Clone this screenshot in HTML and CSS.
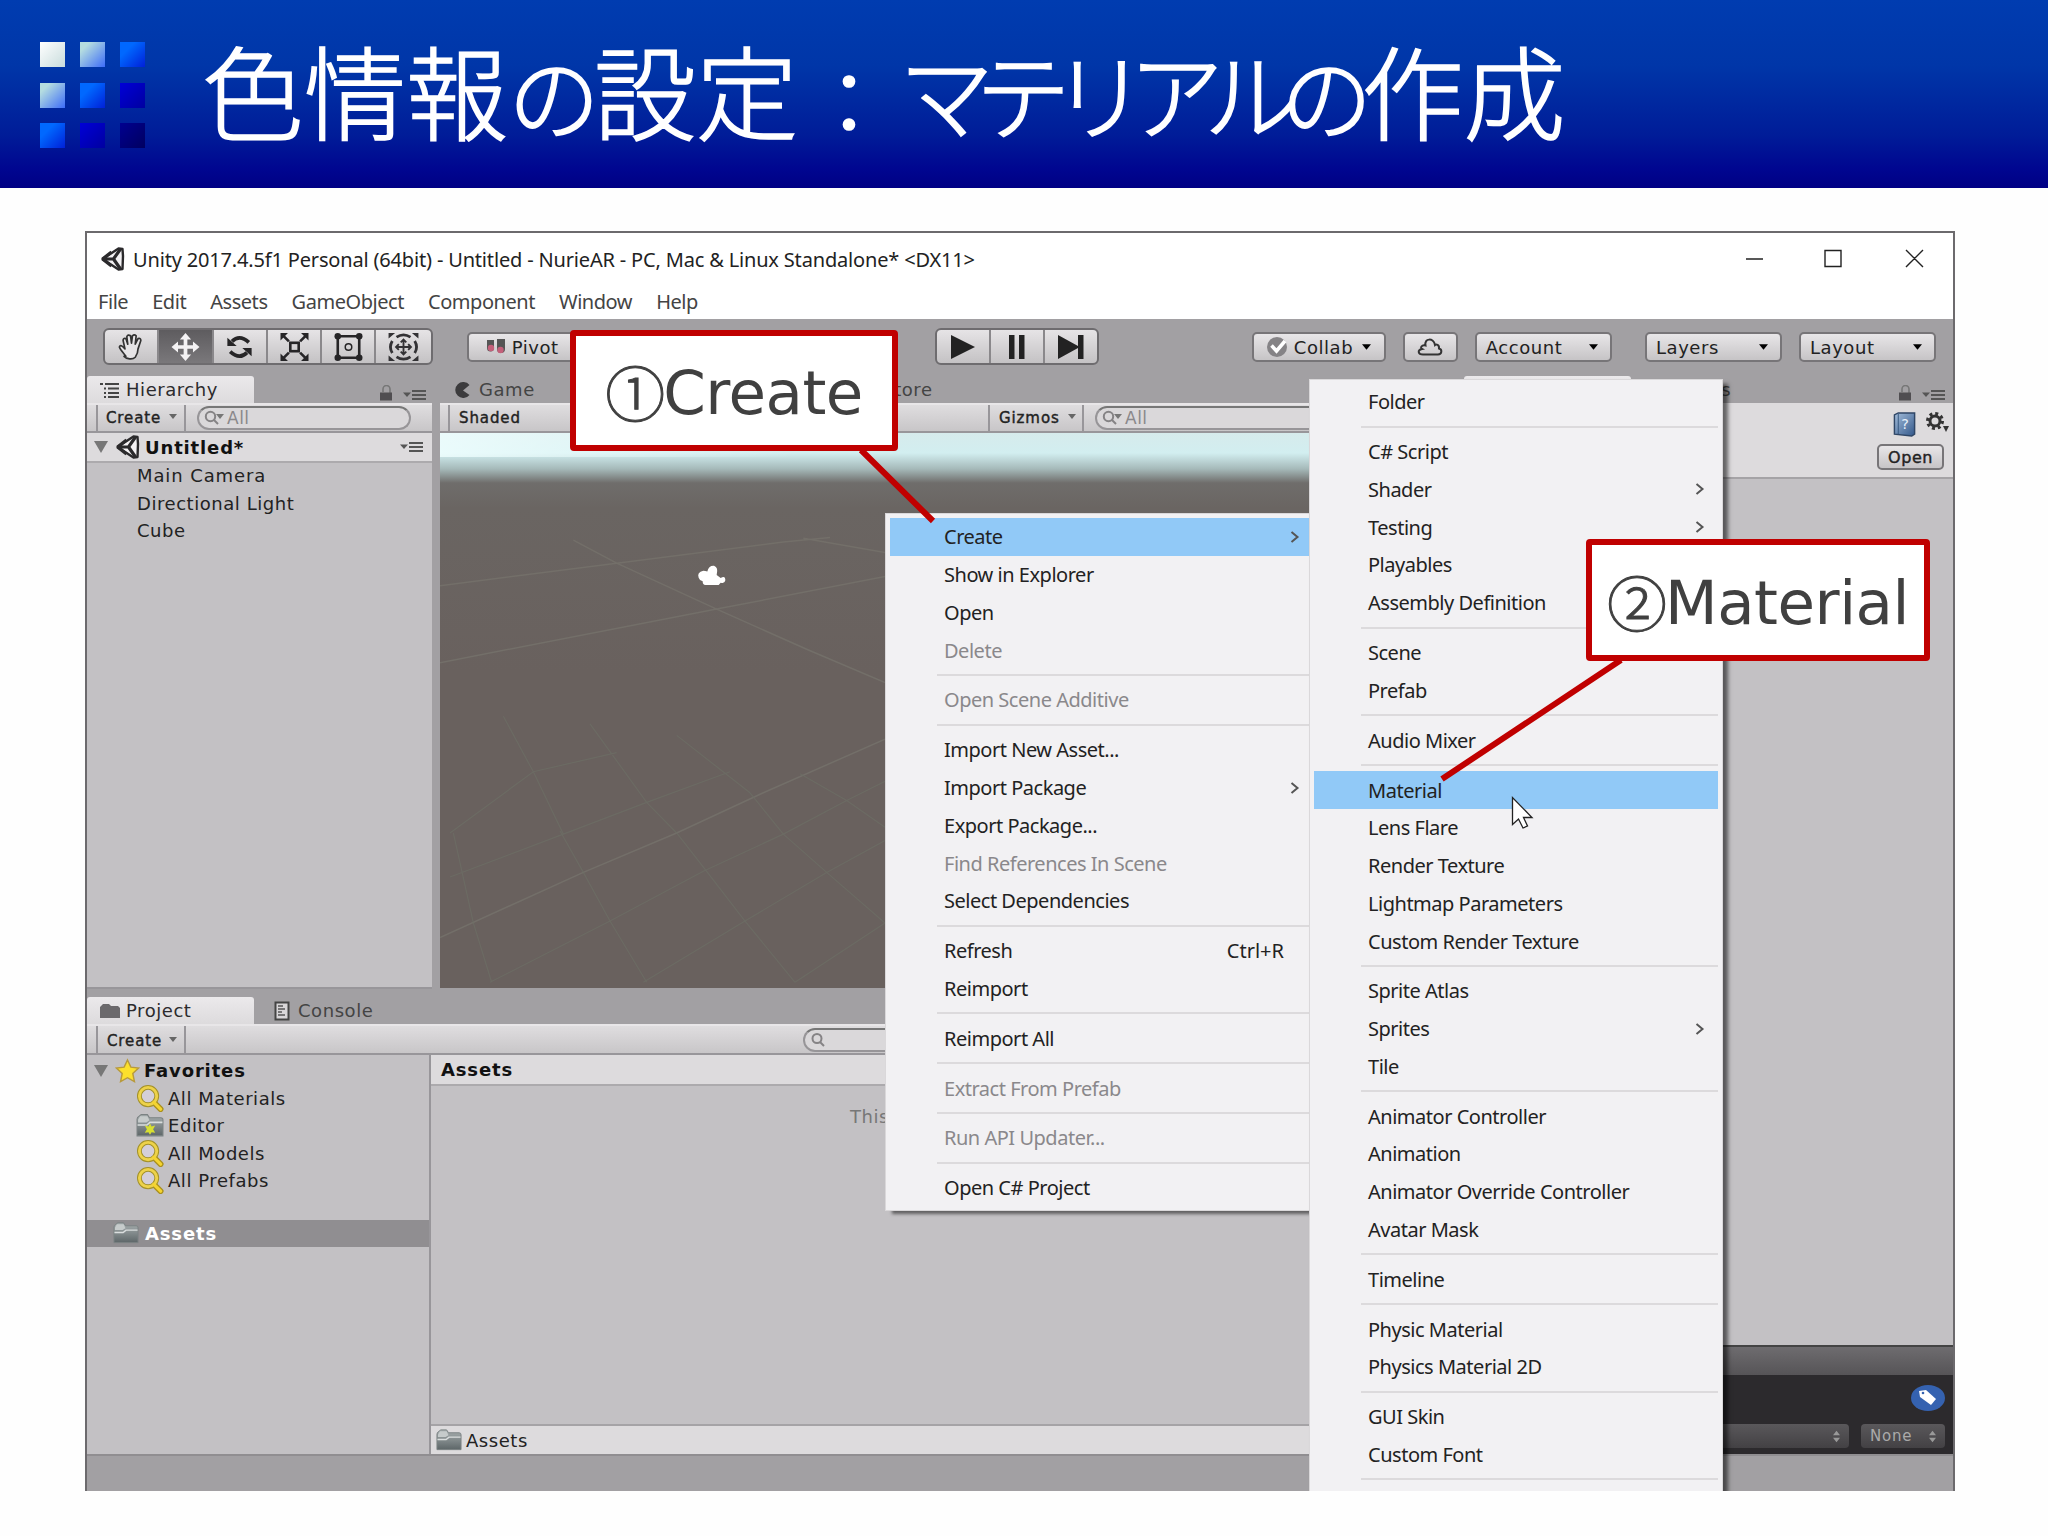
FILE: index.html
```html
<!DOCTYPE html>
<html lang="ja">
<head>
    <meta charset="UTF-8">
    <meta name="viewport" content="width=device-width, initial-scale=1.0">
    <title>色情報の設定：マテリアルの作成</title>
    <link rel="stylesheet" href="styles.css">
</head>
<body>
    <svg class="defs" width="0" height="0">
        <defs>
            <linearGradient id="folder-fill" x1="0" y1="0" x2="0" y2="1">
                <stop offset="0" stop-color="#a9b0b1"/><stop offset="1" stop-color="#5d6668"/>
            </linearGradient>
            <linearGradient id="book-fill" x1="0" y1="0" x2="1" y2="1">
                <stop offset="0" stop-color="#a5bedb"/><stop offset="1" stop-color="#32578a"/>
            </linearGradient>
        </defs>
        <symbol id="unity" viewBox="0 0 24 26">
            <path d="M2 13 L18 2.5 L22 3 L22.5 10 L22 23 L18 23.5 Z" fill="#f4f2f4" stroke="#2b2a2c" stroke-width="2.4" stroke-linejoin="round"/>
            <path d="M2 13h11l7-10M13 13l7 10M2 13l9-7M2 13l9 7" fill="none" stroke="#2b2a2c" stroke-width="3.2"/>
        </symbol>
        <symbol id="lock" viewBox="0 0 14 16">
            <path d="M4 7V4a3.5 3.5 0 0 1 7 0v4" fill="none" stroke="#777" stroke-width="1.6"/>
            <rect x="1" y="7.5" width="12" height="8" fill="#504e51"/>
        </symbol>
        <symbol id="options" viewBox="0 0 26 12">
            <path d="M1 3.5h8l-4 4.5z" fill="#555"/>
            <path d="M10 2h14M10 6h14M10 10h14" stroke="#555" stroke-width="2"/>
        </symbol>
        <symbol id="search" viewBox="0 0 22 16">
            <circle cx="6.5" cy="6.5" r="4.7" fill="none" stroke="#858385" stroke-width="2"/>
            <path d="M10 10l4 4" stroke="#858385" stroke-width="2"/>
            <path d="M12 4h8l-4 5z" fill="#777"/>
        </symbol>
        <symbol id="down" viewBox="0 0 10 6"><path d="M0 0h10l-5 6z"/></symbol>
        <symbol id="chevron" viewBox="0 0 10 14"><path d="M1.5 2l6 5-6 5" fill="none" stroke="#555" stroke-width="2"/></symbol>
        <symbol id="magnifier" viewBox="0 0 28 28">
            <path d="M18 18l7 7" stroke="#a98f1c" stroke-width="6" stroke-linecap="round"/>
            <circle cx="12" cy="11.5" r="9" fill="#d4cfd8" stroke="#a39128" stroke-width="5"/>
            <circle cx="12" cy="11.5" r="9" fill="none" stroke="#edd24a" stroke-width="3"/>
            <path d="M18 18l7 7" stroke="#f4d430" stroke-width="3.5" stroke-linecap="round"/>
        </symbol>
        <symbol id="folder" viewBox="0 0 27 22">
            <path d="M1 21V5q0-2 2-3l2-1.5h6L13 3.500h11q2 0 2 2V21z" fill="url(#folder-fill)" stroke="#7b8283" stroke-width="1"/>
            <path d="M2 5.500l2-3.500h7l2 4-3 2H2z" fill="#c6cbcb"/>
            <path d="M1.500 10.500h9l3-2.500h12" fill="none" stroke="#dadede" stroke-width="1.500"/>
        </symbol>
        <symbol id="updown" viewBox="0 0 8 14"><path d="M0 5.500l4-5 4 5zM0 8.500l4 5 4-5z" fill="#999"/></symbol>
    </svg>

    <header class="slide-header">
        <div class="squares">
            <i class="sq pale"></i><i class="sq light"></i><i class="sq mid"></i>
            <i class="sq light"></i><i class="sq mid"></i><i class="sq deep"></i>
            <i class="sq mid"></i><i class="sq deep"></i><i class="sq navy"></i>
        </div>
        <h1>色情報<span class="no">の</span>設定<span class="colon">：</span><span class="kana">マテリアル</span><span class="no last">の</span>作成</h1>
    </header>

    <main class="window">
        <div class="titlebar">
            <svg class="app-icon"><use href="#unity"/></svg>
            <span class="title-text">Unity 2017.4.5f1 Personal (64bit) - Untitled - NurieAR - PC, Mac &amp; Linux Standalone* &lt;DX11&gt;</span>
            <svg class="win-buttons" viewBox="0 0 180 20" fill="none" stroke="#222" stroke-width="1.400">
                <path d="M1 10h17M80 1.500h16v16h-16zM161 1l17 17M178 1l-17 17"/>
            </svg>
        </div>
        <nav class="menubar">
            <span>File</span><span>Edit</span><span>Assets</span><span>GameObject</span><span>Component</span><span>Window</span><span>Help</span>
        </nav>

        <div class="toolbar">
            <div class="tools">
                <span class="tool">
                    <svg viewBox="0 0 30 30" fill="#e6e4e6" stroke="#333" stroke-width="1.800" stroke-linejoin="round" stroke-linecap="round"><path d="M9 25C6 21 3 18 2 15q1-3 4 0l2 2L6 8q0-3 3-2l2 6-1-8q1-3 4-1l1 8 1-8q2-2 4 0l-1 9 3-6q3-1 3 2l-3 9q0 5-3 9c-3 3-9 2-12-1z"/></svg>
                </span>
                <span class="tool active">
                    <svg viewBox="0 0 30 30" fill="#f4f2f4"><path d="M15 0l6 7h-4v6h6V9l7 6-7 6v-4h-6v6h4l-6 7-6-7h4v-6H7v4l-7-6 7-6v4h6V7H9z"/></svg>
                </span>
                <span class="tool">
                    <svg viewBox="0 0 30 30" fill="none" stroke="#262527" stroke-width="4"><path d="M7 9q8-8 18 1M23 21q-8 8-18-1"/><path d="M2 5v9h10zM28 25v-9H18z" fill="#262527" stroke="none"/></svg>
                </span>
                <span class="tool">
                    <svg viewBox="0 0 30 30" fill="none" stroke="#262527" stroke-width="2.800"><rect x="10.500" y="10.500" width="9" height="9"/><path d="M9 9L2 2M21 9l7-7M9 21l-7 7M21 21l7 7"/><path d="M0 0h8L0 8zM30 0v8l-8-8zM0 30v-8l8 8zM30 30h-8l8-8z" fill="#262527" stroke="none"/></svg>
                </span>
                <span class="tool">
                    <svg viewBox="0 0 30 30" fill="none" stroke="#262527" stroke-width="2.800"><path d="M3.500 3.500h23v23h-23z"/><circle cx="15" cy="15" r="3.500" stroke-width="1.600"/><g fill="#262527" stroke="none"><circle cx="3.500" cy="3.500" r="3.500"/><circle cx="26.500" cy="3.500" r="3.500"/><circle cx="3.500" cy="26.500" r="3.500"/><circle cx="26.500" cy="26.500" r="3.500"/></g></svg>
                </span>
                <span class="tool">
                    <svg class="wide" viewBox="0 0 32 30" fill="none" stroke="#333235" stroke-width="3"><path d="M8.500 4.500q7.500-5 15 0M8.500 25.500q7.500 5 15 0M4 8.500q-4 6.500 0 13M28 8.500q4 6.500 0 13"/><path d="M16 7v16M8 15h16M13 10l3-3 3 3M13 20l3 3 3-3M11 12l-3 3 3 3M21 12l3 3-3 3" stroke-width="2"/><path d="M0 0h7L0 6zM32 0h-7l7 6zM0 30h7l-7-6zM32 30h-7l7-6z" fill="#333235" stroke="none"/></svg>
                </span>
            </div>
            <div class="button pivot">
                <svg viewBox="0 0 20 16"><path d="M1 1h7v8a3.500 3.500 0 0 1-7 0zM11 0h8v10a4 4 0 0 1-8 0z" fill="#555"/><circle cx="5" cy="9" r="3.200" fill="#c4607a"/><circle cx="14.500" cy="11" r="3.200" fill="#c4607a"/></svg>
                Pivot
            </div>
            <div class="play">
                <span><svg viewBox="0 0 26 26"><path d="M1 1l24 12L1 25z"/></svg></span>
                <span><svg viewBox="0 0 26 26"><path d="M5 1h5.500v24H5zM15 1h5.500v24H15z"/></svg></span>
                <span><svg viewBox="0 0 26 26"><path d="M0 1l20 11V1h5.500v24H20V14L0 25z"/></svg></span>
            </div>
            <div class="button collab">
                <svg class="check" viewBox="0 0 20 20"><circle cx="10" cy="10" r="10" fill="#858386"/><path d="M4.500 8.500l5 5.500L18 4" fill="none" stroke="#fff" stroke-width="3.500"/></svg>
                Collab
                <svg class="arrow"><use href="#down"/></svg>
            </div>
            <div class="button cloud">
                <svg viewBox="0 0 26 18" fill="none" stroke="#333" stroke-width="2"><path d="M6 16.500h15c4 0 4.500-5 1-6 .5-4-3-4.500-4-3.500C16.500-.5 7 0 8.500 7.500 4.500 6.500 3 10 5 11c-5 1-4 5.500 1 5.500z"/></svg>
            </div>
            <div class="button dropdown account">Account <svg class="arrow"><use href="#down"/></svg></div>
            <div class="button dropdown layers">Layers <svg class="arrow"><use href="#down"/></svg></div>
            <div class="button dropdown">Layout <svg class="arrow"><use href="#down"/></svg></div>
        </div>

        <div class="docks">
            <div class="work">
                <div class="upper">
                    <section class="hierarchy">
                        <div class="tabs">
                            <span class="tab current">
                                <svg class="list-icon" viewBox="0 0 20 16"><path d="M0 2h3M5 2h14M4 6.500h2M8 6.500h11M4 11h2M8 11h11M4 15h2M8 15h11" stroke="#444" stroke-width="1.800"/></svg>
                                Hierarchy
                            </span>
                            <span class="tab-icons"><svg class="lock"><use href="#lock"/></svg><svg class="options"><use href="#options"/></svg></span>
                        </div>
                        <div class="strip">
                            <span class="create">Create <svg class="arrow-s"><use href="#down"/></svg></span>
                            <span class="searchbox"><svg><use href="#search"/></svg>All</span>
                        </div>
                        <div class="scene-row">
                            <svg class="fold" viewBox="0 0 14 12"><path d="M0 0h14L7 12z"/></svg>
                            <svg class="app-icon"><use href="#unity"/></svg>
                            <b>Untitled*</b>
                            <svg class="options"><use href="#options"/></svg>
                        </div>
                        <ul class="objects">
                            <li>Main Camera</li>
                            <li>Directional Light</li>
                            <li>Cube</li>
                        </ul>
                    </section>
                    <section class="scene">
                        <div class="tabs">
                            <span class="tab game">
                                <svg class="pac" viewBox="0 0 16 16"><path d="M14.500 3A8 8 0 1 0 14.500 13L8 8.500z" fill="#3c3b3d"/></svg>
                                Game
                            </span>
                            <span class="tab store">Asset Store</span>
                        </div>
                        <div class="strip">
                            <span class="shaded">Shaded</span>
                            <span class="gizmos">Gizmos <svg class="arrow-s"><use href="#down"/></svg></span>
                            <span class="searchbox"><svg><use href="#search"/></svg>All</span>
                        </div>
                        <div class="viewport">
                            <svg class="grid" viewBox="30 20 1335 1450" preserveAspectRatio="none">
                                <g class="major">
                                    <path d="M30 419L560 360L1060 305L1200 293M30 620L860 480L1365 395M430 300L560 360L860 480L1130 585L1365 672M30 1338L460 1168L740 1065L1000 960L1365 820M1120 295L1365 332"/>
                                </g>
                                <g class="minor">
                                    <path d="M180 1455L540 1295L820 1165L1060 1068L1250 980L1365 930M640 1455L945 1295L1190 1168L1365 1085M1095 1455L1365 1300M60 1180L400 1068L650 985L900 905M60 1065L310 905L560 855M70 1065L130 1300L185 1455M390 1060L460 1168L540 1295L650 1455M740 1065L830 1165L945 1295L1095 1455M1060 1068L1190 1168L1365 1300M480 780L650 985L740 1065M960 960L1060 1068M1110 910L1250 980L1365 1050M220 760L310 905L400 1068M740 810L960 960"/>
                                </g>
                                <path class="camera" d="M806 398q-6-14 14-18 6 0 12 2 4-16 20-15 14 4 8 24l12 8q14-8 14 6-2 10-14 6l-6 6h-40q-8 0-8-10-10-2-12-9z"/>
                            </svg>
                        </div>
                    </section>
                </div>

                <section class="project">
                    <div class="tabs">
                        <span class="tab current">
                            <svg class="tab-folder" viewBox="0 0 20 16"><path d="M0 15V4l3-3h6l2 2h7l2 2v10z" fill="#6b696c"/></svg>
                            Project
                        </span>
                        <span class="tab console">
                            <svg class="page-icon" viewBox="0 0 16 20"><path d="M1.500 1.500h13v17h-13z" fill="#d8d6d8" stroke="#444" stroke-width="2"/><path d="M4 5h5M4 8h7M4 11h4M4 14h7" stroke="#555" stroke-width="1.500"/></svg>
                            Console
                        </span>
                    </div>
                    <div class="strip">
                        <span class="create">Create <svg class="arrow-s"><use href="#down"/></svg></span>
                        <span class="searchbox"><svg viewBox="0 0 16 16"><circle cx="7" cy="6.500" r="4.500" fill="none" stroke="#858385" stroke-width="2"/><path d="M10 10l4 4" stroke="#858385" stroke-width="2"/></svg></span>
                    </div>
                    <div class="browser">
                        <div class="tree">
                            <div class="node">
                                <svg class="fold" viewBox="0 0 14 12"><path d="M0 0h14L7 12z"/></svg>
                                <svg class="star" viewBox="0 0 26 26"><path d="M13 1.500l3.500 7.500 8 1-6 5.500 1.700 8.500L13 20l-7.200 4 1.700-8.500L1.500 10l8-1z" fill="#fce02c" stroke="#b89a3c" stroke-width="1.500"/></svg>
                                <b>Favorites</b>
                            </div>
                            <div class="node child"><svg class="mag"><use href="#magnifier"/></svg>All Materials</div>
                            <div class="node child">
                                <svg class="mag" viewBox="0 0 27 24"><use href="#folder" width="27" height="22" y="1"/><path d="M13.500 10l1.500 3 3.500-1-2 3.500 2 3.500-3.500-.5-1.500 2.500-1.500-2.500-3.500.5 2-3.500-2-3.500 3.500 1z" fill="#d8e030"/></svg>
                                Editor
                            </div>
                            <div class="node child"><svg class="mag"><use href="#magnifier"/></svg>All Models</div>
                            <div class="node child"><svg class="mag"><use href="#magnifier"/></svg>All Prefabs</div>
                            <div class="node selected"><svg class="folder"><use href="#folder"/></svg><b>Assets</b></div>
                        </div>
                        <div class="content">
                            <div class="crumbs"><b>Assets</b></div>
                            <p class="empty">This folder is empty</p>
                            <div class="path"><svg class="folder"><use href="#folder"/></svg>Assets</div>
                        </div>
                    </div>
                </section>
            </div>

            <section class="inspector">
                <div class="tabs">
                    <span class="tab current"></span>
                    <span class="tab">Services</span>
                    <span class="tab-icons"><svg class="lock"><use href="#lock"/></svg><svg class="options"><use href="#options"/></svg></span>
                </div>
                <div class="asset-head">
                    <div class="head-icons">
                        <svg class="book" viewBox="0 0 24 26"><path d="M1 3l4-2h17v22l-3 2-18-2z" fill="url(#book-fill)" stroke="#2f4666" stroke-width="1.500"/><path d="M5 2v21" stroke="#35577f"/><text x="8" y="18">?</text></svg>
                        <svg class="gear" viewBox="0 0 24 22"><circle cx="9" cy="9" r="5" fill="none" stroke="#333" stroke-width="3"/><circle cx="9" cy="9" r="7.500" fill="none" stroke="#333" stroke-width="3" stroke-dasharray="3 2.890"/><path d="M17 14h6l-3 6z" fill="#333"/></svg>
                    </div>
                    <span class="button open">Open</span>
                </div>
                <div class="asset-body"></div>
                <div class="preview-title"></div>
                <div class="preview">
                    <svg class="tag" viewBox="0 0 34 26"><ellipse cx="17" cy="13" rx="17" ry="13" fill="#3562b0"/><path d="M8 6l7-1 10 9-5 6L9 12z" fill="#fff"/><circle cx="12" cy="8" r="1.300" fill="#3562b0"/></svg>
                    <div class="bundle">
                        <span class="popup long"><svg><use href="#updown"/></svg></span>
                        <span class="popup">None<svg><use href="#updown"/></svg></span>
                    </div>
                </div>
            </section>
        </div>
        <footer class="statusbar"></footer>

        <ul class="context-menu assets-menu">
            <li class="hover">Create<svg class="chev"><use href="#chevron"/></svg></li>
            <li>Show in Explorer</li>
            <li>Open</li>
            <li class="off">Delete</li>
            <li class="sep"></li>
            <li class="off">Open Scene Additive</li>
            <li class="sep"></li>
            <li>Import New Asset...</li>
            <li>Import Package<svg class="chev"><use href="#chevron"/></svg></li>
            <li>Export Package...</li>
            <li class="off">Find References In Scene</li>
            <li>Select Dependencies</li>
            <li class="sep"></li>
            <li>Refresh<span class="key">Ctrl+R</span></li>
            <li>Reimport</li>
            <li class="sep"></li>
            <li>Reimport All</li>
            <li class="sep"></li>
            <li class="off">Extract From Prefab</li>
            <li class="sep"></li>
            <li class="off">Run API Updater...</li>
            <li class="sep"></li>
            <li>Open C# Project</li>
        </ul>

        <ul class="context-menu create-menu">
            <li>Folder</li>
            <li class="sep"></li>
            <li>C# Script</li>
            <li>Shader<svg class="chev"><use href="#chevron"/></svg></li>
            <li>Testing<svg class="chev"><use href="#chevron"/></svg></li>
            <li>Playables</li>
            <li>Assembly Definition</li>
            <li class="sep"></li>
            <li>Scene</li>
            <li>Prefab</li>
            <li class="sep"></li>
            <li>Audio Mixer</li>
            <li class="sep"></li>
            <li class="hover">Material</li>
            <li>Lens Flare</li>
            <li>Render Texture</li>
            <li>Lightmap Parameters</li>
            <li>Custom Render Texture</li>
            <li class="sep"></li>
            <li>Sprite Atlas</li>
            <li>Sprites<svg class="chev"><use href="#chevron"/></svg></li>
            <li>Tile</li>
            <li class="sep"></li>
            <li>Animator Controller</li>
            <li>Animation</li>
            <li>Animator Override Controller</li>
            <li>Avatar Mask</li>
            <li class="sep"></li>
            <li>Timeline</li>
            <li class="sep"></li>
            <li>Physic Material</li>
            <li>Physics Material 2D</li>
            <li class="sep"></li>
            <li>GUI Skin</li>
            <li>Custom Font</li>
            <li class="sep"></li>
        </ul>
    </main>

    <!-- callouts and mouse pointer -->
    <svg class="leaders" viewBox="0 0 2048 1536">
        <path d="M861 450L933 521M1621 660L1442 779" stroke="#c00000" stroke-width="6"/>
        <path d="M1512.500 797.500v27l6-5.500 4.500 9 4.500-2-4-8.500h8.500z" fill="#fff" stroke="#222" stroke-width="1.300"/>
    </svg>
    <div class="callout step-one"><span class="num">①</span>Create</div>
    <div class="callout step-two"><span class="num">②</span>Material</div>
</body>
</html>
```
FILE: styles.css
```css
* {
    box-sizing: border-box;
}
body {
    margin: 0;
    width: 2048px;
    height: 1536px;
    overflow: hidden;
    position: relative;
    background: #fefefe;
    color: #222;
    font-family: "DejaVu Sans", sans-serif;
    font-size: 18px;
    letter-spacing: 0.55px;
}
ul, p, h1 {
    margin: 0;
    padding: 0;
    list-style: none;
}
svg {
    flex: none;
}
.defs {
    position: absolute;
}

/* slide header */
.slide-header {
    height: 188px;
    display: flex;
    align-items: flex-start;
    padding: 42px 0 0 40px;
    background: linear-gradient(#003cb0 0%, #0036a8 35%, #001c98 72%, #000690 90%, #000084 100%);
}
.squares {
    display: grid;
    grid-template-columns: repeat(3, 25px);
    grid-auto-rows: 25px;
    gap: 15.5px 15px;
}
.sq.pale { background: linear-gradient(135deg, #fff, #c8dcdc); }
.sq.light { background: linear-gradient(135deg, #b4dce0 20%, #3c6cf8); }
.sq.mid { background: linear-gradient(135deg, #0068ff 30%, #0020d8); }
.sq.deep { background: linear-gradient(135deg, #0000d8, #0000a0); }
.sq.navy { background: linear-gradient(135deg, #000090, #000060); }
h1 {
    margin: -27px 0 0 57px;
    color: #fff;
    font-family: "Noto Sans CJK JP", sans-serif;
    font-weight: 300;
    font-size: 102px;
    line-height: 148px;
    letter-spacing: 0;
    white-space: nowrap;
    -webkit-text-stroke: 1.6px #fff;
}
h1 .no {
    font-size: 92px;
    letter-spacing: -6px;
}
h1 .last {
    letter-spacing: -11px;
}
h1 .colon {
    font-size: 86px;
    line-height: 1;
    vertical-align: -3px;
    padding: 0 7px 0 8px;
}
h1 .kana {
    font-size: 95px;
    letter-spacing: -18.500px;
}

/* editor window */
.window {
    position: relative;
    width: 1870px;
    height: 1260px;
    margin: 43px 0 0 85px;
    display: flex;
    flex-direction: column;
    overflow: hidden;
    border: 2px solid #6c6a6d;
    border-bottom: none;
    background: #fff;
}
.titlebar {
    height: 52px;
    display: flex;
    align-items: center;
    padding: 0 28px 0 13px;
    font-family: "Noto Sans", sans-serif;
    font-size: 20px;
}
.titlebar .app-icon {
    width: 25px;
    height: 26px;
    margin-right: 8px;
}
.title-text {
    flex: 1;
    letter-spacing: -0.17px;
}
.win-buttons {
    width: 180px;
    height: 20px;
}
.menubar {
    height: 34px;
    display: flex;
    align-items: center;
    padding: 0 0 2px 11px;
    gap: 24px;
    font-family: "Noto Sans", sans-serif;
    font-size: 20px;
    letter-spacing: -0.45px;
    color: #444;
}
.toolbar {
    height: 57px;
    display: flex;
    align-items: flex-start;
    padding: 9px 17px 0 16px;
    background: #a2a0a3;
}
.tools, .play {
    display: flex;
    height: 37px;
    border: 2px solid #6e6c6f;
    border-radius: 6px;
    overflow: hidden;
    background: linear-gradient(#e6e4e6, #c4c2c4);
}
.tool {
    width: 54.300px;
    display: flex;
    align-items: center;
    justify-content: center;
    border-right: 2px solid #8a888b;
}
.tool:last-child {
    border: none;
}
.tool.active {
    background: linear-gradient(#5e5c5f, #7a787b);
}
.tool svg {
    width: 29px;
    height: 28px;
}
.tool .wide {
    width: 33px;
}
.play {
    width: 164px;
}
.play span {
    flex: 1;
    display: flex;
    align-items: center;
    justify-content: center;
    border-right: 2px solid #8a888b;
}
.play span:last-child {
    border: none;
}
.play svg {
    width: 26px;
    height: 26px;
    fill: #222;
}
.button {
    height: 30px;
    margin-top: 4px;
    display: flex;
    align-items: center;
    border: 2px solid #777578;
    border-radius: 5px;
    background: linear-gradient(#e8e6e8, #c6c4c6);
}
.arrow {
    width: 9px;
    height: 6px;
}
.arrow-s {
    width: 8px;
    height: 5px;
    fill: #666;
    margin-bottom: 4px;
}
.pivot {
    width: 146px;
    margin: 4px -94px 0 34px;
    padding-left: 17px;
    gap: 6px;
}
.pivot svg {
    width: 20px;
    height: 16px;
}
.pivot + .play {
    margin-left: 416px;
}
.collab {
    width: 134px;
    margin-left: 153px;
    padding-left: 13px;
    gap: 7px;
}
.collab .check {
    width: 20px;
    height: 20px;
}
.collab .arrow {
    margin-left: 2px;
}
.cloud {
    width: 55px;
    margin-left: 17px;
    justify-content: center;
}
.cloud svg {
    width: 26px;
    height: 18px;
}
.dropdown {
    width: 137px;
    padding: 0 12px 0 9px;
    justify-content: space-between;
    margin-left: 17px;
}
.dropdown.layers {
    margin-left: auto;
}

/* docked panels */
.docks {
    height: 1078px;
    display: flex;
    background: #a2a0a3;
}
.work {
    width: 1370px;
    display: flex;
    flex-direction: column;
}
.upper {
    height: 613px;
    display: flex;
    gap: 8px;
}
.tabs {
    height: 27px;
    display: flex;
    color: #444;
}
.tab {
    display: flex;
    align-items: center;
    gap: 8px;
}
.tab.current {
    width: 167px;
    padding-left: 13px;
    gap: 6px;
    color: #2c2b2d;
    background: linear-gradient(#ebe9eb, #dddbdd);
    border-radius: 3px 3px 0 0;
}
.tab-icons {
    display: flex;
    align-items: flex-end;
    gap: 9px;
    margin-left: auto;
    padding: 0 4px 2px 0;
}
.lock {
    width: 14px;
    height: 16px;
}
.options {
    width: 26px;
    height: 12px;
}
.strip {
    height: 30px;
    display: flex;
    align-items: center;
    font-size: 15px;
    letter-spacing: 0.9px;
    -webkit-text-stroke: 0.4px #222;
    border-top: 2px solid #e8e6e8;
    border-bottom: 2px solid #98969a;
    background: linear-gradient(#dfdddf, #c8c6c8);
}
.create {
    width: 90px;
    height: 26px;
    margin-left: 9px;
    padding: 0 7px 0 8px;
    display: flex;
    align-items: center;
    justify-content: space-between;
    border: solid #98969a;
    border-width: 0 2px;
}
.searchbox {
    height: 24px;
    display: flex;
    align-items: center;
    gap: 1px;
    padding-left: 5px;
    border: 2px solid #979598;
    border-top-color: #777;
    border-radius: 12px;
    background: #dad8da;
    color: #8a888b;
    font-size: 17px;
    letter-spacing: 0.5px;
    -webkit-text-stroke: 0;
}
.searchbox svg {
    width: 22px;
    height: 16px;
}
.hierarchy {
    width: 345px;
    height: 613px;
    background: #c3c1c4;
    border-bottom: 2px solid #98969a;
}
.hierarchy .tabs, .scene .tabs, .project .tabs, .inspector .tabs {
    background: #a2a0a3;
}
.list-icon {
    width: 20px;
    height: 16px;
}
.hierarchy .searchbox {
    width: 214px;
    margin-left: 11px;
}
.scene-row {
    height: 30px;
    display: flex;
    align-items: center;
    padding: 0 7px 0 7px;
    background: #dddbdd;
    border-bottom: 2px solid #acaaad;
}
.fold {
    width: 14px;
    height: 12px;
    fill: #777;
    margin-right: 7px;
}
.scene-row .app-icon {
    width: 25px;
    height: 26px;
    margin-right: 5px;
}
.scene-row .options {
    margin-left: auto;
}
.objects li {
    height: 27.500px;
    line-height: 25px;
    padding-left: 50px;
}
.objects li:first-child {
    letter-spacing: 0.9px;
}
.scene {
    flex: 1;
}
.game {
    width: 384px;
    padding-left: 15px;
}
.pac {
    width: 16px;
    height: 16px;
}
.shaded {
    width: 540px;
    height: 26px;
    line-height: 26px;
    margin-left: 8px;
    padding-left: 9px;
    border-left: 2px solid #98969a;
}
.gizmos {
    width: 96px;
    height: 26px;
    display: flex;
    align-items: center;
    justify-content: space-between;
    padding: 0 6px 0 9px;
    border: solid #98969a;
    border-width: 0 2px;
}
.scene .searchbox {
    width: 250px;
    margin-left: 11px;
}
.viewport {
    height: 555px;
    background:
        linear-gradient(90deg, rgba(240, 255, 255, 0.8), rgba(240, 255, 255, 0) 35%) 0 0 / 100% 24px no-repeat,
        linear-gradient(#d6ebec 0, #d2eef0 20px, #a5b9b9 36px, #6f6d6b 50px, #6a6562 75px, #69615e 240px);
}
.grid {
    display: block;
    width: 445px;
    height: 555px;
    fill: none;
}
.grid path {
    vector-effect: non-scaling-stroke;
}
.major {
    stroke: #736f69;
    stroke-width: 1.500px;
}
.minor {
    stroke: #6d6f66;
    stroke-width: 1.200px;
    opacity: 0.7;
}
.camera {
    fill: #fff;
    stroke: none;
}

/* project browser */
.project {
    flex: 1;
    margin-top: 8px;
    display: flex;
    flex-direction: column;
}
.project .strip {
    height: 31px;
}
.tab-folder {
    width: 20px;
    height: 16px;
}
.page-icon {
    width: 16px;
    height: 20px;
}
.console {
    margin-left: 20px;
}
.project .create {
    height: 27px;
    padding-top: 3px;
    padding-left: 9px;
}
.project .strip .searchbox {
    width: 500px;
    margin-left: 617px;
}
.project .searchbox svg {
    width: 16px;
}
.browser {
    flex: 1;
    display: flex;
    background: #c3c1c4;
}
.tree {
    width: 344px;
    border-right: 2px solid #98969a;
    padding-top: 2px;
}
.node {
    height: 27.500px;
    display: flex;
    align-items: center;
    padding-left: 7px;
}
.node.child {
    padding-left: 49px;
}
.node.selected {
    margin-top: 25px;
    padding-left: 26px;
    color: #fff;
    background: #908e91;
}
.star {
    width: 25px;
    height: 26px;
    margin-right: 4px;
}
.mag {
    width: 28px;
    height: 27px;
    margin-right: 4px;
}
.folder {
    width: 26px;
    height: 22px;
    margin-right: 6px;
}
b {
    color: #111;
    font-size: 18px;
    letter-spacing: 0.85px;
}
.selected b {
    color: #fff;
}
.content {
    flex: 1;
    display: flex;
    flex-direction: column;
}
.crumbs {
    height: 31px;
    display: flex;
    align-items: center;
    padding-left: 10px;
    background: #dddbdd;
    border-bottom: 2px solid #acaaad;
}
.empty {
    flex: 1;
    padding: 20px 0 0 419px;
    color: #777;
}
.path {
    height: 30px;
    display: flex;
    align-items: center;
    padding-left: 5px;
    background: #dddbdd;
    border-top: 2px solid #a5a3a6;
}
.path .folder {
    margin-right: 4px;
}
.statusbar {
    flex: 1;
    background: #a2a0a3;
    border-top: 2px solid #908e91;
}

/* inspector */
.inspector {
    flex: 1;
    display: flex;
    flex-direction: column;
    padding-left: 7px;
}
.inspector .tab.current {
    margin-right: 20px;
}
.inspector .tab-icons {
    padding-right: 6px;
}
.asset-head {
    height: 76px;
    display: flex;
    flex-direction: column;
    align-items: flex-end;
    padding-top: 9px;
    background: #dddbdd;
    border-bottom: 2px solid #a5a3a6;
}
.head-icons {
    display: flex;
    gap: 9px;
    padding-right: 3px;
}
.book {
    width: 24px;
    height: 25px;
}
.book text {
    fill: #e8f0fa;
    font-size: 15px;
}
.gear {
    width: 24px;
    height: 22px;
}
.open {
    width: 67px;
    height: 26px;
    margin: 7px 9px 0 0;
    justify-content: center;
    font-size: 16px;
    -webkit-text-stroke: 0.4px #222;
}
.asset-body {
    flex: 1;
    background: #c3c1c4;
}
.preview-title {
    height: 30px;
    border-top: 2px solid #444;
    background: linear-gradient(#6e6c6f, #565457);
}
.preview {
    height: 79px;
    display: flex;
    flex-direction: column;
    align-items: flex-end;
    gap: 13px;
    padding: 10px 8px 0 0;
    background: #2c2a2d;
}
.tag {
    width: 34px;
    height: 26px;
}
.bundle {
    display: flex;
    gap: 12px;
}
.popup {
    width: 84px;
    height: 24px;
    display: flex;
    align-items: center;
    justify-content: space-between;
    padding: 0 9px;
    border-radius: 4px;
    background: linear-gradient(#5a585b, #434144);
    color: #aaa;
    font-size: 15px;
    letter-spacing: 0.8px;
}
.popup svg {
    width: 7px;
    height: 13px;
}
.popup.long {
    width: 360px;
    justify-content: flex-end;
}

/* context menus */
.context-menu {
    position: absolute;
    padding: 5px 4px;
    background: #f2f1f3;
    border: 1px solid #dad8da;
    font-family: "Noto Sans", sans-serif;
    font-size: 20px;
    letter-spacing: -0.48px;
    white-space: nowrap;
}
.context-menu li {
    height: 37.750px;
    display: flex;
    align-items: center;
    padding-left: 54px;
}
.context-menu .hover {
    background: #91c9f7;
}
.context-menu .off {
    color: #8a888b;
}
.context-menu .sep {
    height: 12.100px;
    padding: 0;
    margin-left: 47px;
}
.context-menu .sep::before {
    content: "";
    flex: 1;
    height: 2px;
    background: #dcdadc;
}
.chev {
    width: 10px;
    height: 14px;
    margin: 0 13px 0 auto;
}
.key {
    margin: 0 26px 0 auto;
    letter-spacing: 0;
}
.assets-menu {
    left: 798px;
    top: 280px;
    width: 426px;
    padding: 4px 0 3px 4px;
    box-shadow: 6px 4px 3px -1px rgba(0, 0, 0, 0.5);
}
.assets-menu .chev {
    margin-right: 10px;
}
.create-menu {
    left: 1222px;
    top: 146px;
    width: 414px;
    height: 1130px;
    padding-top: 3px;
    box-shadow: 5px 5px 4px rgba(0, 0, 0, 0.55);
}

.leaders {
    position: absolute;
    left: 0;
    top: 0;
    width: 2048px;
    height: 1536px;
    fill: none;
}
.callout {
    position: absolute;
    display: flex;
    align-items: center;
    justify-content: center;
    padding-top: 4px;
    border: 6px solid #c00000;
    border-radius: 4px;
    background: #fff;
    color: #404040;
    font-size: 61px;
    letter-spacing: -0.500px;
}
.num {
    font-family: "Noto Sans CJK JP", sans-serif;
    font-weight: 300;
    font-size: 60px;
    line-height: 80px;
    letter-spacing: -2px;
    margin-top: -3px;
    -webkit-text-stroke: 1px #404040;
}
.step-one {
    left: 570px;
    top: 330px;
    width: 328px;
    height: 121px;
}
.step-two {
    left: 1586px;
    top: 539px;
    width: 344px;
    height: 122px;
}
```
